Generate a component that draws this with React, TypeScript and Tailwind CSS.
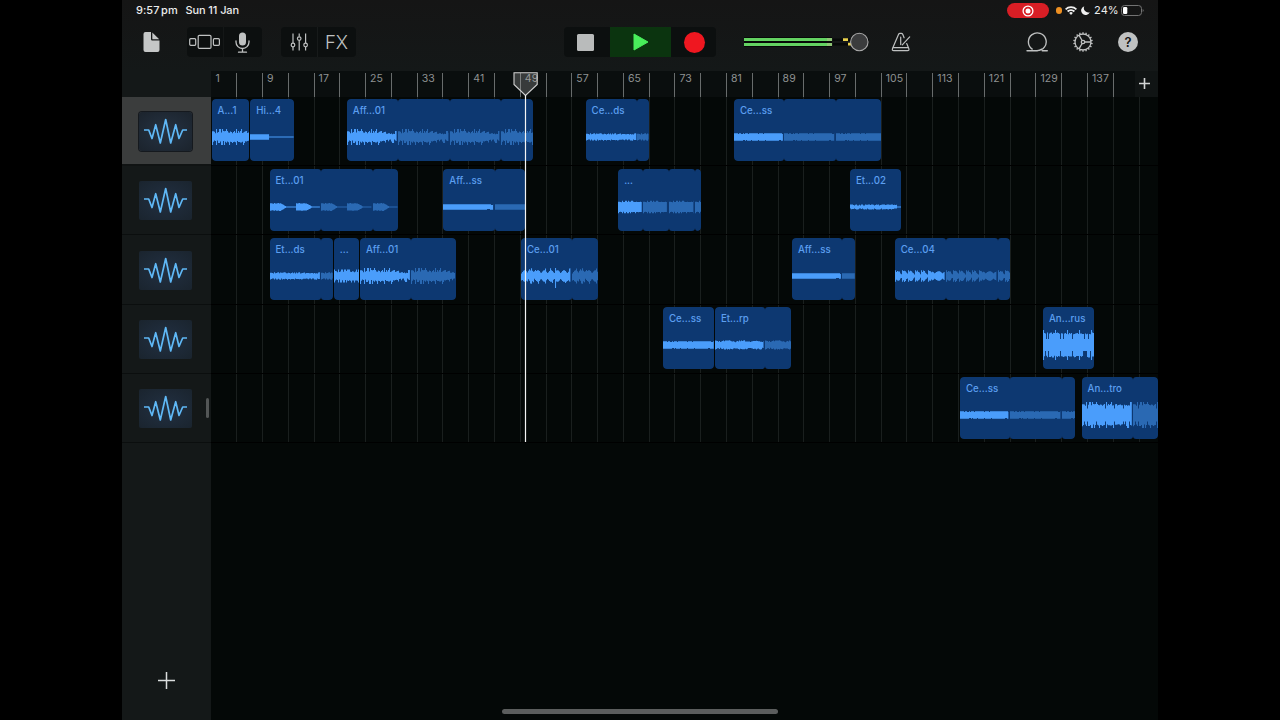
import type { ReactNode } from "react";

const TIMELINE_X = 211;
const TIMELINE_END = 1158;

type Wave =
    | "beat"
    | "hit"
    | "chords"
    | "bass"
    | "softBass"
    | "pulse"
    | "shaker"
    | "thin"
    | "melody"
    | "lumps"
    | "drums"
    | "arp"
    | "chorus"
    | "intro";

type Clip = {
    label: string;
    start: number;
    end: number;
    loops?: number[];
    wave: Wave;
};

const TRACKS: Clip[][] = [
    [
        { label: "A...1", start: 211.5, end: 249.2, wave: "beat" },
        { label: "Hi...4", start: 250.3, end: 294, wave: "hit" },
        { label: "Aff...01", start: 346.8, end: 533, loops: [398, 450, 501], wave: "beat" },
        { label: "Ce...ds", start: 585.6, end: 649, loops: [637.5], wave: "chords" },
        { label: "Ce...ss", start: 734, end: 881.5, loops: [784.5, 836.3], wave: "bass" },
    ],
    [
        { label: "Et...01", start: 269.5, end: 397.6, loops: [321, 373], wave: "pulse" },
        { label: "Aff...ss", start: 443.3, end: 525, loops: [495], wave: "softBass" },
        { label: "...", start: 618.2, end: 701, loops: [643.5, 669, 695], wave: "shaker" },
        { label: "Et...02", start: 850, end: 901, wave: "thin" },
    ],
    [
        { label: "Et...ds", start: 269.5, end: 332.7, loops: [321], wave: "chords" },
        { label: "...", start: 333.8, end: 359, wave: "melody" },
        { label: "Aff...01", start: 360, end: 455.6, loops: [411.5], wave: "beat" },
        { label: "Ce...01", start: 521, end: 598, loops: [572], wave: "lumps" },
        { label: "Aff...ss", start: 792, end: 855.3, loops: [842.5], wave: "softBass" },
        { label: "Ce...04", start: 894.8, end: 1010, loops: [946, 998], wave: "drums" },
    ],
    [
        { label: "Ce...ss", start: 663, end: 713.8, wave: "bass" },
        { label: "Et...rp", start: 714.9, end: 791, loops: [765], wave: "arp" },
        { label: "An...rus", start: 1043, end: 1094, wave: "chorus" },
    ],
    [
        { label: "Ce...ss", start: 960, end: 1075, loops: [1010, 1062], wave: "bass" },
        { label: "An...tro", start: 1081.6, end: 1158, loops: [1133], wave: "intro" },
    ],
];

const noise = (n: number) => {
    const v = Math.sin(n * 127.1 + 11.7) * 43758.5453;
    return v - Math.floor(v);
};

// half height of the wave at pixel i; seed differs above and below the axis
function amplitude(wave: Wave, i: number, seed: number): number {
    const r = noise(i + seed);
    switch (wave) {
        case "beat": {
            const fade = i > 38 ? 0.75 : 1;
            return (r > 0.82 ? 8 : 3.4 + r * 3.4) * fade;
        }
        case "hit":
            return i < 19 ? 2.8 : 0.4;
        case "chords":
            return 2.4 + r * 1.3;
        case "bass":
            return r > 0.85 ? 3.1 : 3.7;
        case "softBass":
            return i > 36 && r > 0.75 ? 2.1 : 2.8;
        case "pulse": {
            const p = i % 25.5;
            if (p < 11) return 3.3 + r * 0.6;
            return p < 17 ? Math.max(0.4, (17 - p) * 0.55) : 0.4;
        }
        case "shaker":
            return r > 0.75 ? 6.2 : 4.8 + r * 0.6;
        case "thin":
            return i > 46 ? 0.6 : r > 0.8 ? 1.5 : 2 + r * 0.8;
        case "melody":
            return r > 0.7 ? 6.5 : 3.6 + r * 2;
        case "lumps": {
            if (i === 34) return seed ? 12 : 8;
            return 2.6 + Math.abs(Math.sin(i * 0.48)) * 3.2 + (r > 0.78 ? 2 : 0);
        }
        case "drums": {
            const p = i % 6.4;
            if (i > 36) return 2.6 + Math.abs(Math.sin(i * 0.4)) * 2.2;
            return p < 1 ? 5.8 : Math.max(1.2, 5 - Math.abs(p - 2.6) * 1.1 + r);
        }
        case "arp":
            return 2.6 + Math.abs(Math.sin(i * 0.22 + 2)) * 1 + r * 1.2;
        case "chorus":
            if (i % 12 === 0) return 15;
            return i % 12 === 5 || r < 0.1 ? 6 : 10.5 + r * 2;
        case "intro":
            if (r > 0.84) return 13;
            return i % 9 === 5 || r < 0.08 ? 6.5 : 9 + r * 2.6;
    }
}

function wavePath(wave: Wave, width: number) {
    const n = Math.ceil(width);
    let d = "";
    for (let i = 0; i < n; i++) {
        const up = amplitude(wave, i, 0);
        const down = amplitude(wave, i, 300);
        const w = Math.min(1.05, width - i);
        d += `M${i} ${(20 - up).toFixed(1)}h${w.toFixed(2)}V${(20 + down).toFixed(1)}h${(-w).toFixed(2)}z`;
    }
    return d;
}

function ClipBlock({ clip, gap }: { clip: Clip; gap: number }) {
    const edges = [clip.start, ...(clip.loops ?? []), clip.end];
    const last = edges.length - 2;
    return (
        <div
            className="relative flex h-[62px] shrink-0 overflow-hidden rounded-[4px]"
            style={{ marginLeft: gap, width: clip.end - clip.start }}
        >
            {edges.slice(0, -1).map((x, i) => {
                const w = edges[i + 1] - x;
                const waveW = i < last ? w - 1.6 : w;
                return (
                    <div
                        key={x}
                        className="shrink-0 overflow-hidden rounded-[3px] bg-[#0d3871] pt-[18px]"
                        style={{ width: w }}
                    >
                        <svg
                            width={w}
                            height="40"
                            className={i === 0 ? "block fill-[#4a9dfb]" : "block fill-[#2a69b3]"}
                        >
                            <path d={wavePath(clip.wave, waveW)} />
                        </svg>
                    </div>
                );
            })}
            <span className="absolute top-[5px] left-[6px] text-[9.7px] leading-[13px] font-medium tracking-[0.02px] whitespace-nowrap text-[#5c9ff0]">
                {clip.label}
            </span>
        </div>
    );
}

function Lane({ clips }: { clips: Clip[] }) {
    return (
        <div className="flex h-[69.4px] border-b border-black pt-[2.8px]">
            {clips.map((clip, i) => (
                <ClipBlock
                    key={clip.start}
                    clip={clip}
                    gap={clip.start - (i === 0 ? TIMELINE_X : clips[i - 1].end)}
                />
            ))}
        </div>
    );
}

function TrackHeader({ selected, handle }: { selected: boolean; handle: boolean }) {
    return (
        <div
            className={
                selected
                    ? "relative flex h-[69.4px] justify-center border-b-2 border-[#101313] bg-[#3b3d3d] pt-[15.3px] pr-[2px]"
                    : "relative flex h-[69.4px] justify-center border-b border-[#0b0e0e] pt-[15.3px] pr-[2px]"
            }
        >
            <div
                className={
                    selected
                        ? "h-[39px] w-[53px] rounded-[3px] bg-[radial-gradient(#263343,#1b232c)] ring-1 ring-[#15191e]"
                        : "h-[39px] w-[53px] rounded-[2px] bg-[radial-gradient(#223042,#1a242e)]"
                }
            >
                <svg width="53" height="39" viewBox="0 0 53 39" fill="none" stroke="#5fb8f6" strokeWidth="1.7" strokeLinejoin="round">
                    <path d="M5 18H9.7L13 26.5L16.7 12.7L21.3 31L26.7 7.5L31.7 31L36.7 12.7L40 26.5L43.7 18H48" />
                </svg>
            </div>
            {handle && <div className="absolute top-[24px] right-[2px] h-5 w-[3px] rounded-full bg-[#535656]" />}
        </div>
    );
}

function StatusBar() {
    return (
        <div className="flex h-5 items-center pr-[14px] pl-[14px] text-[11px] font-medium text-[#ececec]">
            <span className="w-[50px] tracking-[0.05px] whitespace-nowrap">9:57<span className="ml-[1.5px]">pm</span></span>
            <span className="-ml-[0.5px] tracking-[-0.1px]">Sun 11 Jan</span>
            <div className="ml-auto flex items-center">
                <div className="mt-px flex h-[15.5px] w-[42px] items-center justify-center rounded-full bg-[#d81e25]">
                    <svg width="12" height="12" viewBox="0 0 12 12">
                        <circle cx="6" cy="6" r="4.9" fill="none" stroke="#fff" strokeWidth="1.3" />
                        <circle cx="6" cy="6" r="2.5" fill="#fff" />
                    </svg>
                </div>
                <div className="mt-px ml-[7px] size-[6.5px] rounded-full bg-[#ee9022]" />
                <svg width="12" height="9" viewBox="0 0 12 9" className="ml-[3px]" fill="none" stroke="#f0f0f0" strokeWidth="1.8">
                    <path d="M.6 3.3a7.6 7.6 0 0 1 10.8 0M2.6 5.5a4.8 4.8 0 0 1 6.8 0" />
                    <path d="M4.2 7a2.5 2.5 0 0 1 3.6 0L6 9z" fill="#f0f0f0" stroke="none" />
                </svg>
                <svg width="9" height="9" viewBox="0 0 9 9" className="ml-[4px]" fill="#f0f0f0">
                    <path d="M3.3.2A4.5 4.5 0 1 0 8.8 6.2 4.4 4.4 0 0 1 3.3.2z" />
                </svg>
                <span className="mt-px ml-[4px] w-[24px] text-[11px] font-normal tracking-[0.1px]">24%</span>
                <svg width="23" height="11" viewBox="0 0 23 11" className="ml-[3px]">
                    <rect x=".5" y=".5" width="20" height="10" rx="3" fill="none" stroke="#737373" />
                    <rect x="2" y="2" width="4.3" height="7" rx="1.2" fill="#fff" />
                    <path d="M21.7 4v3q1-.6 1-1.5t-1-1.5z" fill="#737373" />
                </svg>
            </div>
        </div>
    );
}

function ButtonGroup({ children, className }: { children: ReactNode; className: string }) {
    return <div className={`flex h-[30px] overflow-hidden rounded-[4px] bg-[#0c0f0f] ${className}`}>{children}</div>;
}

const GEAR_TEETH = Array.from({ length: 18 }, (_, i) => i * 20);

function Toolbar() {
    return (
        <div className="flex h-[45px] items-center pb-px text-[#bfc1c1]">
            <svg width="17" height="20" viewBox="0 0 17 20" className="ml-[21px]" fill="#c5c7c7">
                <path d="M2.5 0H8v7.2q0 1.2 1.2 1.2H16.5V18q0 2-2 2h-12q-2 0-2-2V2q0-2 2-2z" />
                <path d="M9.3.4L16.2 7.3H10.2q-.9 0-.9-.9z" />
            </svg>
            <ButtonGroup className="ml-[26.5px] w-[75px]">
                <button className="flex w-[37px] items-center justify-center border-r border-[#141717]">
                    <svg width="31" height="16" viewBox="0 0 31 16" fill="none" stroke="currentColor" strokeWidth="1.2">
                        <rect x=".7" y="4.7" width="6" height="6.6" rx="1" />
                        <rect x="9.2" y="1.4" width="12.8" height="13" rx="1.2" />
                        <rect x="24.4" y="4.7" width="6" height="6.6" rx="1" />
                    </svg>
                </button>
                <button className="flex flex-1 items-center justify-center">
                    <svg width="15" height="21" viewBox="0 0 15 21" fill="none" stroke="currentColor" strokeWidth="1.3" strokeLinecap="round">
                        <rect x="4" y=".6" width="7" height="12.8" rx="3.5" fill="currentColor" stroke="none" />
                        <path d="M1 8.8v1.2a6.5 6.5 0 0 0 13 0V8.8M7.5 16.7V20M3.5 20.2h8" />
                    </svg>
                </button>
            </ButtonGroup>
            <ButtonGroup className="ml-[19px] w-[75px]">
                <button className="flex w-[37px] items-center justify-center border-r border-[#171a1a]">
                    <svg width="18" height="18" viewBox="0 0 18 18" fill="none" stroke="currentColor" strokeWidth="1.2">
                        <path d="M3 .5V10M3 14v3.5M9.2.5V3.6M9.2 7.6v9.9M15.6.5V10M15.6 14v3.5" />
                        <circle cx="3" cy="12" r="1.8" />
                        <circle cx="9.2" cy="5.6" r="1.8" />
                        <circle cx="15.6" cy="12" r="1.8" />
                    </svg>
                </button>
                <button className="flex-1 text-center text-[18.5px] leading-[31px] font-light">FX</button>
            </ButtonGroup>
            <ButtonGroup className="ml-[208.5px] w-[152px]">
                <button className="flex w-[46px] items-center pl-[13px]">
                    <div className="size-[17px] rounded-[1.5px] bg-[#b9bbbb]" />
                </button>
                <button className="flex w-[61px] items-center justify-center bg-[#0b340f]">
                    <svg width="16" height="18" viewBox="0 0 16 18">
                        <path d="M1 1L15 9L1 17z" fill="#49ee5b" stroke="#49ee5b" strokeLinejoin="round" />
                    </svg>
                </button>
                <button className="flex flex-1 items-center pl-[13px]">
                    <div className="size-[21px] rounded-full bg-[#ef1720]" />
                </button>
            </ButtonGroup>
            <div className="ml-[28px] flex h-[10px] w-[88px] flex-col justify-center gap-[2px] bg-[#060907]">
                <div className="flex h-[3px] bg-[#64d262]"><div className="ml-auto w-[5px] bg-[#8ec575]" /></div>
                <div className="flex h-[3px] bg-[#64d262]"><div className="ml-auto w-[5px] bg-[#8ec575]" /></div>
            </div>
            <svg width="37" height="20" viewBox="0 0 37 20">
                <path d="M1 7.7H37M1 12.3H30" stroke="#070909" strokeWidth="2.5" />
                <path d="M11 7.7H16M16 12.2H21.8" stroke="#e8cf4c" strokeWidth="2.8" />
                <circle cx="27.3" cy="10" r="8.7" fill="#3b3c3d" stroke="#a9a9a9" strokeWidth="1.1" />
            </svg>
            <svg width="20" height="20" viewBox="0 0 20 20" className="ml-[21.5px]" fill="none" stroke="currentColor" strokeWidth="1.2" strokeLinejoin="round" strokeLinecap="round">
                <path d="M13.1 5.8L11.7 2.2Q11.3 1.3 10.3 1.3H9Q8 1.3 7.6 2.2L1.5 16.6Q.8 18.6 2.8 18.6H16.5Q18.5 18.6 17.8 16.6L15.7 11.6" />
                <path d="M2.3 15.6H17.2M9.7 5.2V12.6M11.3 12.9L18.7 4.9" />
            </svg>
            <svg width="22" height="20" viewBox="0 0 22 20" className="ml-[115px]" fill="none" stroke="currentColor" strokeWidth="1.35" strokeLinecap="round">
                <path d="M1 18.7H11A8.9 8.9 0 1 0 6.2 17.1M15.8 17.1A8.9 8.9 0 0 1 11 18.7M16.2 18.7H21.3" />
            </svg>
            <svg width="20" height="20" viewBox="0 0 20 20" className="ml-[25px]" fill="none" stroke="currentColor" strokeWidth="1.3">
                <circle cx="10" cy="10" r="8" />
                <circle cx="10" cy="10" r="1.7" />
                <path d="M11.7 10H18M9.1 8.5L6 3.1M9.1 11.5L6 16.9" />
                {GEAR_TEETH.map((angle) => (
                    <path key={angle} d="M10 .2V1.8" transform={`rotate(${angle} 10 10)`} />
                ))}
            </svg>
            <div className="ml-[25.5px] flex size-[20px] items-center justify-center rounded-full bg-[#bfc1c1] text-[13px] leading-none font-semibold text-[#121515]">
                ?
            </div>
        </div>
    );
}

const RULER_CELLS = Array.from({ length: 35 }, (_, i) => i);
const GRID_CELLS = Array.from({ length: 36 }, (_, i) => i);

function Ruler() {
    return (
        <div className="relative flex h-[25.5px] bg-[#0a0e0e] pl-[0.4px]">
            {RULER_CELLS.map((i) => (
                <div
                    key={i}
                    className="mt-[2px] w-[25.79px] shrink-0 border-r border-[#686c6c] pl-[4px] text-[10.5px] leading-[12px] tracking-[0.1px] text-[#8f9292]"
                >
                    {i % 2 === 0 && i * 4 + 1}
                </div>
            ))}
            <button className="ml-[21px] flex flex-1 items-center justify-center bg-[#101414] pr-[3px]">
                <svg width="11" height="11" viewBox="0 0 11 11" stroke="#d2d4d4" strokeWidth="1.6">
                    <path d="M5.5 0V11M0 5.5H11" />
                </svg>
            </button>
        </div>
    );
}

// marker and line over the ruler and the lanes
function Playhead() {
    return (
        <svg width="26" height="371" viewBox="0 0 26 371" className="pointer-events-none absolute top-0 left-[302px]">
            <path d="M1 1.7H24.2V13.5L12.5 24.4L1 13.5z" fill="#b0b0b0" fillOpacity=".28" stroke="#d0d0d0" strokeWidth="1.1" />
            <path d="M12.5 24V371" stroke="#f4f4f4" strokeWidth="1.2" />
        </svg>
    );
}

export default function App() {
    return (
        <div className="flex h-[720px] w-[1280px] overflow-hidden bg-black pl-[122px] font-['Inter',sans-serif]">
            <div className="relative flex w-[1036px] flex-col overflow-hidden bg-[#141818]">
                <div className="h-[71px] bg-linear-to-b from-[#151515] to-[#141818]">
                    <StatusBar />
                    <Toolbar />
                </div>
                <div className="flex flex-1">
                    <aside className="flex w-[89px] flex-col pt-[25.5px]">
                        {TRACKS.map((_, i) => (
                            <TrackHeader key={i} selected={i === 0} handle={i === 4} />
                        ))}
                        <button className="mt-auto mb-[31px] flex justify-center">
                            <svg width="17" height="17" viewBox="0 0 17 17" stroke="#dadddd" strokeWidth="1.5">
                                <path d="M8.5 0V17M0 8.5H17" />
                            </svg>
                        </button>
                    </aside>
                    <main className="relative flex-1 bg-[#040807]" style={{ maxWidth: TIMELINE_END - TIMELINE_X }}>
                        <Ruler />
                        <div className="relative">
                            <div className="absolute inset-0 flex pl-[0.4px]">
                                {GRID_CELLS.map((i) => (
                                    <div key={i} className="w-[25.79px] shrink-0 border-r border-[#1a1f1e]" />
                                ))}
                            </div>
                            <div className="relative">
                                {TRACKS.map((clips, i) => (
                                    <Lane key={i} clips={clips} />
                                ))}
                            </div>
                        </div>
                        <Playhead />
                    </main>
                </div>
                <div className="absolute bottom-[6.5px] left-[380px] h-[4.5px] w-[276px] rounded-full bg-[#5b5d5d]" />
            </div>
        </div>
    );
}
